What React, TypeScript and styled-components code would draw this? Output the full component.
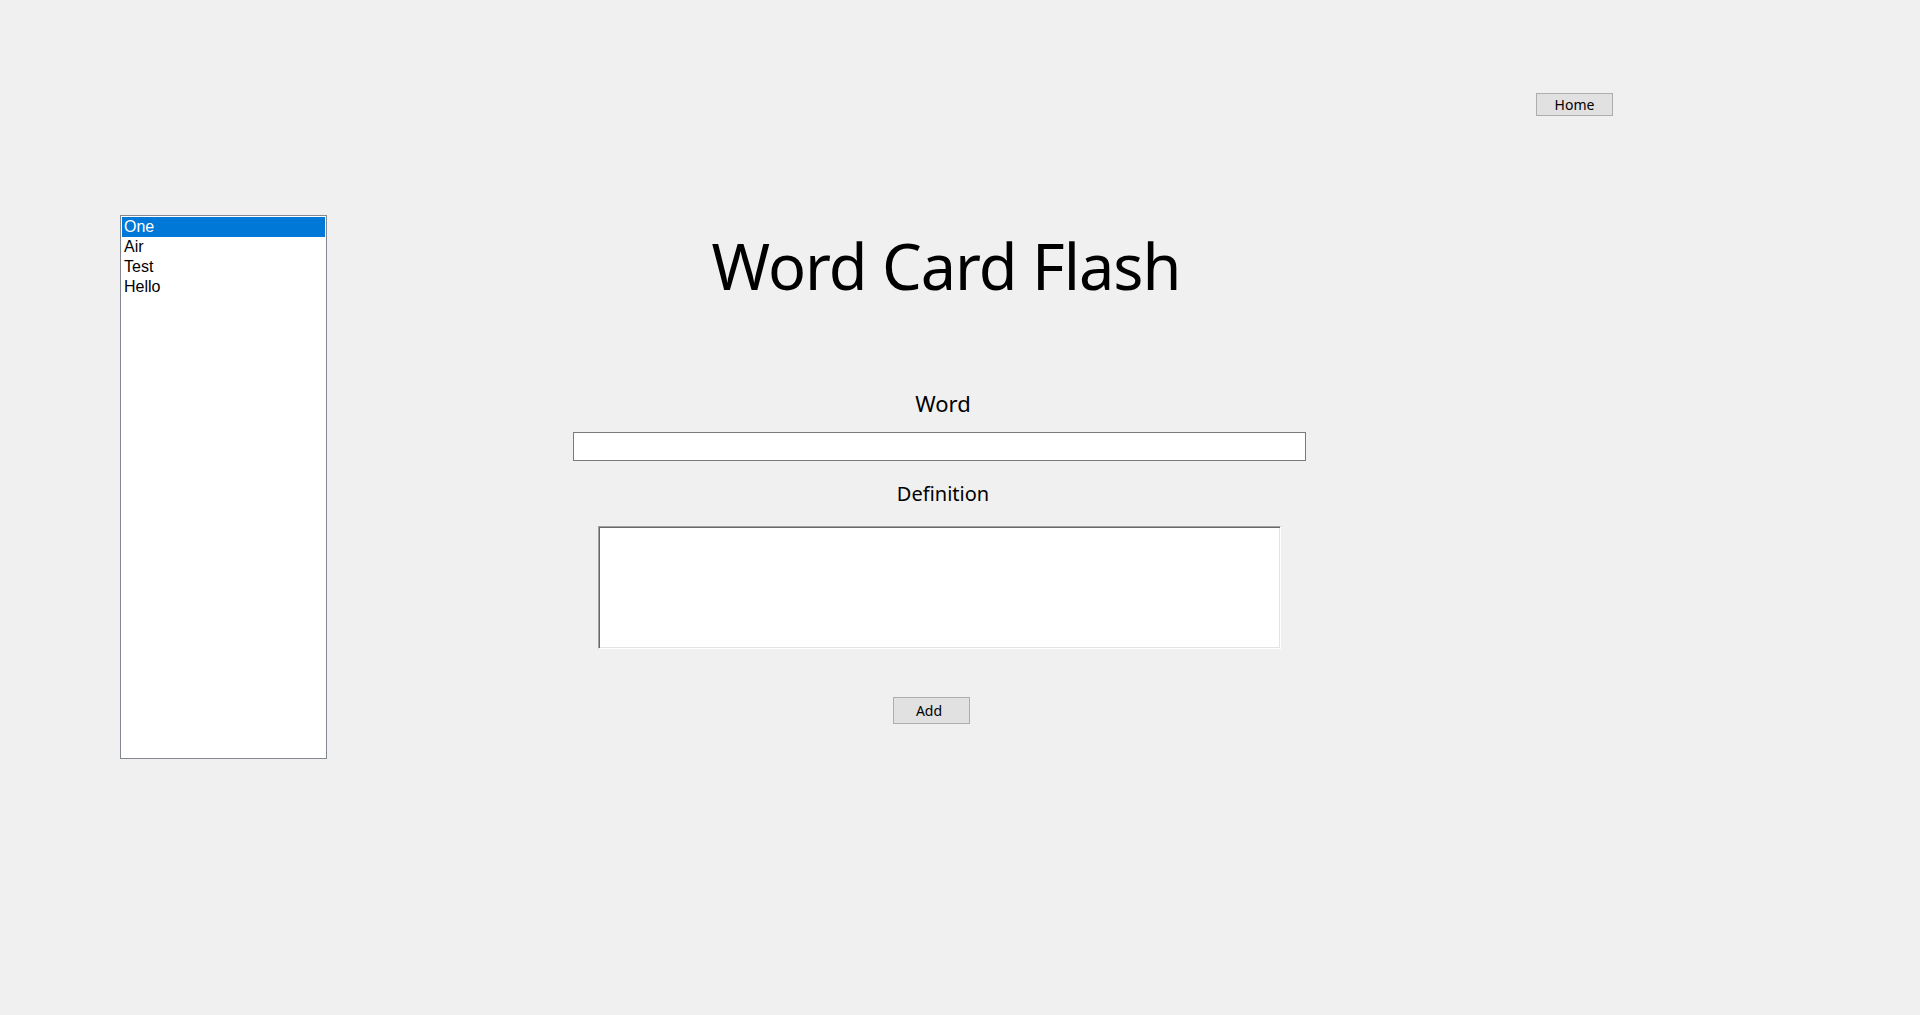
import styled, { createGlobalStyle } from "styled-components";

const GlobalStyle = createGlobalStyle`
    html, body {
        margin: 0;
        padding: 0;
        background: #f0f0f0;
    }
    body {
        min-height: 100vh;
        font-family: "Noto Sans", "Open Sans", sans-serif;
        color: #000;
    }
`

const Page = styled.div`
    width: 1920px;
    height: 1015px;
    display: flex;
    flex-direction: column;
    overflow: hidden;
`

const TopBar = styled.div`
    display: flex;
    justify-content: flex-end;
    margin-top: 93px;
    padding-right: 307px;
`

const Button = styled.button<{ $shift?: number }>`
    width: 77px;
    height: 23px;
    box-sizing: border-box;
    padding: 1px 0 0;
    background: #e1e1e1;
    border: 1px solid #adadad;
    border-radius: 0;
    font-family: "Noto Sans", "Open Sans", sans-serif;
    font-size: 14px;
    line-height: 20px;
    color: #000;
    margin-right: ${p => (p.$shift ?? 0) < 0 ? -2 * (p.$shift ?? 0) : 0}px;
    cursor: default;
`

const Body = styled.div`
    display: flex;
    align-items: flex-start;
    margin-top: 99px;
    padding-left: 120px;
`

const ListBox = styled.ul`
    width: 207px;
    height: 544px;
    box-sizing: border-box;
    margin: 0;
    padding: 1px;
    list-style: none;
    background: #fff;
    border: 1px solid #828790;
`

const ListItem = styled.li<{ $selected?: boolean }>`
    height: 20px;
    line-height: 20px;
    padding-left: 2px;
    font-family: "Liberation Sans", Arial, sans-serif;
    font-size: 16px;
    background: ${p => p.$selected ? "#0078d7" : "transparent"};
    color: ${p => p.$selected ? "#fff" : "#000"};
`

const Main = styled.div`
    width: 1224px;
    display: flex;
    flex-direction: column;
    align-items: center;
`

const Title = styled.h1`
    margin: 11px 0 0 14px;
    font-size: 63px;
    line-height: 80px;
    letter-spacing: -1px;
    font-weight: 400;
`

const Label = styled.div<{ $size: number; $line: number; $top: number }>`
    margin-top: ${p => p.$top}px;
    margin-left: 8px;
    font-size: ${p => p.$size}px;
    line-height: ${p => p.$line}px;
`

const WordInput = styled.input`
    width: 733px;
    height: 29px;
    box-sizing: border-box;
    margin-top: 15px;
    padding: 2px 4px;
    border: 1px solid #7a7a7a;
    background: #fff;
    font-family: "Noto Sans", sans-serif;
    font-size: 15px;
    outline: none;
`

const DefinitionBox = styled.textarea`
    width: 683px;
    height: 123px;
    box-sizing: border-box;
    margin-top: 19px;
    padding: 3px;
    resize: none;
    background: #fff;
    border: 1px solid;
    border-color: #a0a0a0 #fff #fff #a0a0a0;
    box-shadow: inset 1px 1px #696969, inset -1px -1px #e3e3e3;
    font-family: "Noto Sans", sans-serif;
    font-size: 15px;
    outline: none;
`

const AddButton = styled(Button)`
    height: 27px;
    margin-top: 48px;
    padding-right: 4px;
`

const words = ["One", "Air", "Test", "Hello"];

export default function App() {
    return (
        <Page>
            <GlobalStyle />
            <TopBar>
                <Button>Home</Button>
            </TopBar>
            <Body>
                <ListBox>
                    {words.map((w, i) => (
                        <ListItem key={w} $selected={i === 0}>{w}</ListItem>
                    ))}
                </ListBox>
                <Main>
                    <Title>Word Card Flash</Title>
                    <Label $size={22} $line={28} $top={83}>Word</Label>
                    <WordInput />
                    <Label $size={20} $line={26} $top={20}>Definition</Label>
                    <DefinitionBox />
                    <AddButton $shift={-8}>Add</AddButton>
                </Main>
            </Body>
        </Page>
    )
}
